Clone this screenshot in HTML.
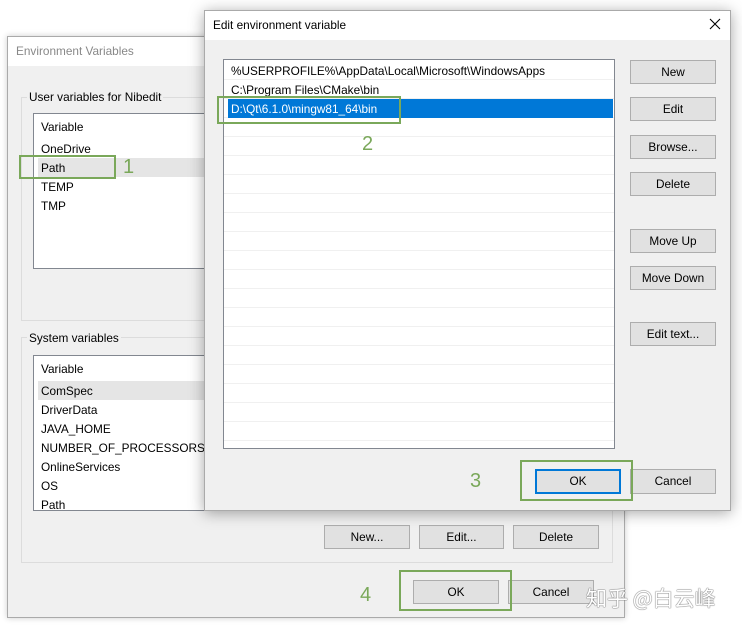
<!DOCTYPE html>
<html><head><style>
*{box-sizing:border-box;margin:0;padding:0}
body{width:742px;height:626px;background:#fff;position:relative;overflow:hidden;font-family:"Segoe UI","Liberation Sans","DejaVu Sans",sans-serif;font-size:11.8px;color:#000}
.a{position:absolute}
.t{position:absolute;white-space:nowrap;line-height:19px;margin-top:1px}
.btn{position:absolute;background:#e1e1e1;border:1px solid #adadad;text-align:center;line-height:22px;font-size:11.8px}
.g{position:absolute;border:2px solid #7aa85a}
.n{position:absolute;color:#7aa85a;font-size:20px;line-height:20px}
</style></head><body>
<div class="a" style="left:7px;top:36px;width:618px;height:582px;background:#f0f0f0;border:1px solid #aaa;box-shadow:0 0 6px rgba(0,0,0,.2)"></div>
<div class="a" style="left:8px;top:37px;width:616px;height:29px;background:#fff"></div>
<div class="t" style="left:16px;top:41px;color:#888">Environment Variables</div>
<div class="a" style="left:21px;top:97px;width:592px;height:224px;border:1px solid #dcdcdc"></div>
<div class="t" style="left:27px;top:87px;background:#f0f0f0;padding:0 2px">User variables for Nibedit</div>
<div class="a" style="left:33px;top:113px;width:180px;height:156px;background:#fff;border:1px solid #828790"></div>
<div class="t" style="left:41px;top:117px">Variable</div>
<div class="a" style="left:38px;top:158px;width:170px;height:19px;background:#e5e5e5"></div>
<div class="t" style="left:41px;top:139px">OneDrive</div>
<div class="t" style="left:41px;top:158px">Path</div>
<div class="t" style="left:41px;top:177px">TEMP</div>
<div class="t" style="left:41px;top:196px">TMP</div>
<div class="a" style="left:21px;top:337px;width:592px;height:226px;border:1px solid #dcdcdc"></div>
<div class="t" style="left:27px;top:328px;background:#f0f0f0;padding:0 2px">System variables</div>
<div class="a" style="left:33px;top:355px;width:180px;height:156px;background:#fff;border:1px solid #828790;overflow:hidden"></div>
<div class="t" style="left:41px;top:359px">Variable</div>
<div class="a" style="left:38px;top:381px;width:170px;height:19px;background:#e5e5e5"></div>
<div class="t" style="left:41px;top:381px">ComSpec</div>
<div class="t" style="left:41px;top:400px">DriverData</div>
<div class="t" style="left:41px;top:419px">JAVA_HOME</div>
<div class="t" style="left:41px;top:438px">NUMBER_OF_PROCESSORS</div>
<div class="t" style="left:41px;top:457px">OnlineServices</div>
<div class="t" style="left:41px;top:476px">OS</div>
<div class="t" style="left:41px;top:495px;height:14px;overflow:hidden">Path</div>
<div class="btn" style="left:324px;top:525px;width:86px;height:24px">New...</div>
<div class="btn" style="left:419px;top:525px;width:85px;height:24px">Edit...</div>
<div class="btn" style="left:513px;top:525px;width:86px;height:24px">Delete</div>
<div class="btn" style="left:413px;top:580px;width:86px;height:24px">OK</div>
<div class="btn" style="left:508px;top:580px;width:86px;height:24px">Cancel</div>
<div class="g" style="left:19px;top:155px;width:97px;height:24px"></div>
<div class="n" style="left:123px;top:157px">1</div>
<div class="g" style="left:399px;top:570px;width:113px;height:41px"></div>
<div class="n" style="left:360px;top:585px">4</div>
<div class="a" style="left:204px;top:10px;width:527px;height:501px;background:#f0f0f0;border:1px solid #aaa;box-shadow:0 2px 14px rgba(0,0,0,.35)"></div>
<div class="a" style="left:205px;top:11px;width:525px;height:29px;background:#fff"></div>
<div class="t" style="left:213px;top:15px">Edit environment variable</div>
<svg class="a" style="left:709px;top:18px" width="12" height="12"><path d="M1 1L11 11M11 1L1 11" stroke="#000" stroke-width="1.1"/></svg>
<div class="a" style="left:223px;top:59px;width:392px;height:390px;background:#fff;border:1px solid #828790;overflow:hidden">
<div style="position:absolute;left:0;right:0;top:0;bottom:0;background:repeating-linear-gradient(#fff 0 18px,#f0f0f0 18px 19px);background-position:0 1px"></div>
<div style="position:absolute;left:4px;right:1px;top:39px;height:19px;background:#0078d7"></div>
</div>
<div class="t" style="left:231px;top:61px">%USERPROFILE%\AppData\Local\Microsoft\WindowsApps</div>
<div class="t" style="left:231px;top:80px">C:\Program Files\CMake\bin</div>
<div class="t" style="left:231px;top:99px;color:#fff">D:\Qt\6.1.0\mingw81_64\bin</div>
<div class="btn" style="left:630px;top:60px;width:86px;height:24px">New</div>
<div class="btn" style="left:630px;top:97px;width:86px;height:24px">Edit</div>
<div class="btn" style="left:630px;top:135px;width:86px;height:24px">Browse...</div>
<div class="btn" style="left:630px;top:172px;width:86px;height:24px">Delete</div>
<div class="btn" style="left:630px;top:229px;width:86px;height:24px">Move Up</div>
<div class="btn" style="left:630px;top:266px;width:86px;height:24px">Move Down</div>
<div class="btn" style="left:630px;top:322px;width:86px;height:24px">Edit text...</div>
<div class="btn" style="left:535px;top:469px;width:86px;height:25px;border:2px solid #0078d7;line-height:21px">OK</div>
<div class="btn" style="left:630px;top:469px;width:86px;height:25px">Cancel</div>
<div class="g" style="left:217px;top:96px;width:184px;height:28px"></div>
<div class="n" style="left:362px;top:134px">2</div>
<div class="g" style="left:520px;top:460px;width:113px;height:41px"></div>
<div class="n" style="left:470px;top:471px">3</div>
<div class="t" style="left:586px;top:584px;font-size:21px;line-height:26px;color:#fff;font-family:'Noto Sans CJK SC',sans-serif;text-shadow:0 0 1px #777,0 0 1px #777,0 0 1px #777">知乎 @白云峰</div>
</body></html>
